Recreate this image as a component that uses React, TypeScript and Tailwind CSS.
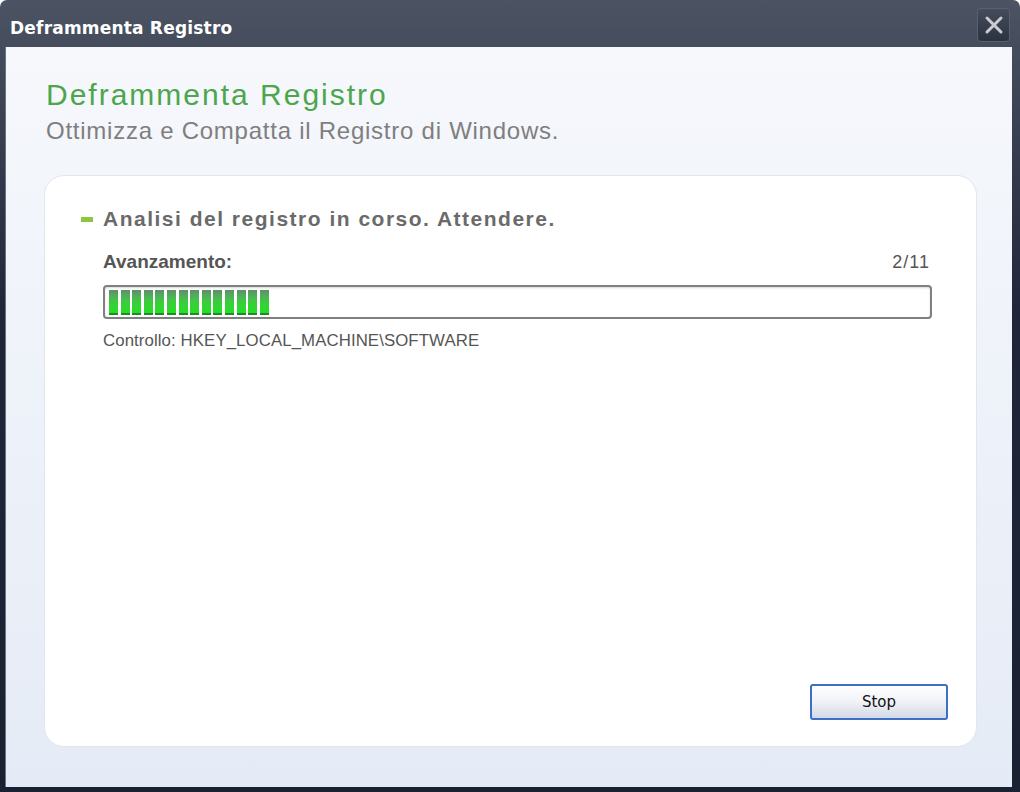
import React from "react";

const segments = Array.from({ length: 14 }, (_, i) => i);

function CloseButton() {
  return (
    <button className="mt-[8px] flex h-[34px] w-[33px] items-center justify-center rounded-[4px] border border-[#5a606d] bg-gradient-to-b from-[#454c5a] to-[#2b3241]">
      <svg width="20" height="20" viewBox="0 0 20 20">
        <path d="M3 3 L17 17 M17 3 L3 17" stroke="#c9cdd3" strokeWidth="3" strokeLinecap="round" />
      </svg>
    </button>
  );
}

function ProgressBar() {
  return (
    <div className="mt-[11px] flex h-[34px] items-center rounded-[4px] border-2 border-[#808080] bg-white px-[4px] shadow-[inset_0_1px_2px_rgba(0,0,0,0.15)]">
      <div className="flex gap-[2.6px]">
        {segments.map((i) => (
          <div
            key={i}
            className="h-[25px] w-[9px] border-b-2 border-[#1f8a2a] bg-gradient-to-b from-[#5b8f6a] via-[#3ccb3e] to-[#1fe01f]"
          />
        ))}
      </div>
    </div>
  );
}

export default function App() {
  return (
    <div className="h-[792px] w-[1020px] bg-white font-['Liberation_Sans',Arial,sans-serif]">
      <div className="flex h-full flex-col rounded-t-[7px] bg-gradient-to-b from-[#4c5362] via-[#1f2638] via-40% to-[#1a2133]">
        {/* Title bar */}
        <div className="flex h-[47px] shrink-0 items-start justify-between pl-[10px] pr-[10px]">
          <span className="mt-[18px] font-['DejaVu_Sans',sans-serif] text-[17px] leading-[20px] font-bold tracking-[0.2px] text-white">
            Deframmenta Registro
          </span>
          <CloseButton />
        </div>

        {/* Body */}
        <div className="mb-[5px] ml-[5px] mr-[8px] flex flex-1 flex-col border-l border-[#6b7383] bg-gradient-to-b from-[#f6f8fc] to-[#e5ebf6] pb-[40px] pl-[38px] pr-[35px] pt-[30px]">
          <div className="pl-[2px]">
            <h1 className="text-[30px] leading-[35px] tracking-[2px] text-[#4ca64c]">Deframmenta Registro</h1>
            <p className="mt-[4px] text-[24px] leading-[30px] tracking-[0.75px] text-[#7f7f7f]">
              Ottimizza e Compatta il Registro di Windows.
            </p>
          </div>

          {/* Card */}
          <div className="mt-[29px] flex flex-1 flex-col rounded-[20px] border border-[#e1e6ef] bg-white pb-[26px] pl-[36px] pr-[28px] pt-[30px]">
            <div className="pr-[16px]">
              <div className="flex items-center gap-[10px]">
                <span className="h-[5px] w-[12px] bg-[#8cc63e]" />
                <h2 className="text-[21px] leading-[26px] font-bold tracking-[1.5px] text-[#6a6a6a]">
                  Analisi del registro in corso. Attendere.
                </h2>
              </div>

              <div className="pl-[22px]">
                <div className="mt-[18px] flex items-baseline justify-between text-[#555555]">
                  <span className="text-[19px] leading-[24px] font-bold">Avanzamento:</span>
                  <span className="pr-[2px] text-[18px] leading-[24px] tracking-[1px]">2/11</span>
                </div>
                <ProgressBar />
                <p className="mt-[12px] text-[16.8px] leading-[20px] tracking-[0.1px] text-[#555555]">
                  Controllo: HKEY_LOCAL_MACHINE\SOFTWARE
                </p>
              </div>
            </div>

            <div className="flex-1" />

            <div className="flex justify-end">
              <button className="h-[36px] w-[138px] rounded-[3px] border-2 border-[#3d6fc6] bg-gradient-to-b from-[#ffffff] via-[#f0f2f7] to-[#d3d9e6] font-['DejaVu_Sans',sans-serif] text-[15px] text-[#111111]">
                Stop
              </button>
            </div>
          </div>
        </div>
      </div>
    </div>
  );
}
